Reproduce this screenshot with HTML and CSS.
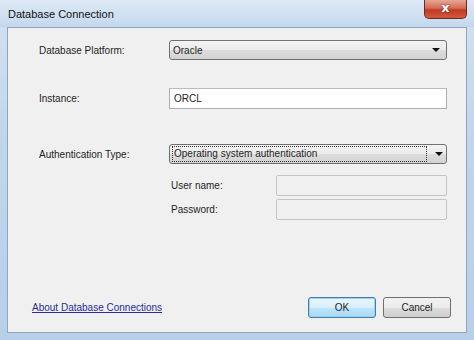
FILE: index.html
```html
<!DOCTYPE html>
<html lang="en">
<head>
    <meta charset="UTF-8">
    <title>Database Connection</title>
    <link rel="stylesheet" href="styles.css">
</head>
<body>
  <div class="window">
    <div class="titlebar">
      <span class="title">Database Connection</span>
      <div class="close-btn">x</div>
    </div>

    <div class="client">
      <div class="form">
        <div class="row row-platform">
          <span class="label">Database Platform:</span>
          <div class="combo">
            <span class="combo-text">Oracle</span>
            <span class="arrow"></span>
          </div>
        </div>

        <div class="row row-instance">
          <span class="label">Instance:</span>
          <div class="textbox">ORCL</div>
        </div>

        <div class="row row-auth">
          <span class="label">Authentication Type:</span>
          <div class="combo combo-focus">
            <span class="combo-text"><span class="focus-rect">Operating system authentication</span></span>
            <span class="combo-sep"></span>
            <span class="arrow"></span>
          </div>
        </div>

        <div class="sub-row sub-user">
          <span class="sub-label">User name:</span>
          <div class="textbox disabled"></div>
        </div>
        <div class="sub-row sub-pass">
          <span class="sub-label">Password:</span>
          <div class="textbox disabled"></div>
        </div>
      </div>

      <div class="footer">
        <a href="#" class="about-link">About Database Connections</a>
        <div class="buttons">
          <div class="btn btn-default">OK</div>
          <div class="btn">Cancel</div>
        </div>
      </div>
    </div>
  </div>
</body>
</html>
```

FILE: styles.css
```css
*,
*::before,
*::after {
box-sizing: border-box;
}

body {
margin: 0;
width: 474px;
height: 340px;
overflow: hidden;
font-family: "Liberation Sans", Arial, sans-serif;
font-size: 10px;
color: #1e1e1e;
}

.window {
width: 474px;
height: 340px;
display: flex;
flex-direction: column;
background: linear-gradient(180deg, #d3e2f1 0%, #c1d6ec 40%, #b7cfe9 100%);
}

/* title bar */
.titlebar {
height: 27px;
display: flex;
justify-content: space-between;
align-items: flex-start;
background: linear-gradient(180deg, #dce8f4 0%, #cfe0f1 60%, #c3d7ec 100%);
}

.title {
font-size: 11px;
color: #111;
margin-left: 8px;
margin-top: 8px;
}

.close-btn {
width: 43px;
height: 19px;
margin-right: 7px;
border: 1px solid #6e2a22;
border-top: none;
border-radius: 0 0 5px 5px;
background: linear-gradient(180deg, #e6a696 0%, #d46c55 45%, #c23a23 55%, #cf5a3e 100%);
color: #fff;
font-family: "DejaVu Sans", sans-serif;
font-weight: bold;
font-size: 13px;
text-align: center;
line-height: 16px;
text-shadow: 0 0 2px #5a1a10;
}

/* client area */
.client {
flex: 1;
margin: 0 7px 7px 7px;
border: 1px solid #8fa6c0;
background-color: #f0f0f0;
display: flex;
flex-direction: column;
}

.form {
padding-left: 30px;
}

.row {
display: grid;
grid-template-columns: 131px 278px;
align-items: center;
}

.row-platform {
margin-top: 12px;
}

.row-instance {
margin-top: 28px;
}

.row-auth {
margin-top: 35px;
}

.label {
padding-left: 1px;
}

.combo {
height: 20px;
display: flex;
align-items: center;
border: 1px solid #707070;
border-radius: 3px;
background: linear-gradient(180deg, #f3f3f3 0%, #ebebeb 50%, #dddddd 51%, #d2d2d2 100%);
padding: 0 6px 0 2px;
}

.combo-text {
flex: 1;
padding-left: 1px;
}

.combo-focus .combo-text {
padding-left: 0;
}

.focus-rect {
display: block;
border: 1px dotted #333;
padding: 1px 2px 2px 1px;
width: 255px;
}

.combo-sep {
width: 1px;
height: 16px;
background-color: #a8a8a8;
margin: 0 6px 0 2px;
}

.arrow {
width: 0;
height: 0;
border-left: 4px solid transparent;
border-right: 4px solid transparent;
border-top: 4px solid #111;
}

.textbox {
height: 21px;
border: 1px solid #abadb3;
border-top-color: #b9bcc2;
background-color: #fff;
padding: 0 4px;
line-height: 19px;
}

.textbox.disabled {
background-color: #f0f0f0;
border-color: #c4c4c4;
border-radius: 2px;
}

.sub-row {
display: grid;
grid-template-columns: 107px 171px;
align-items: center;
margin-left: 131px;
}

.sub-label {
padding-left: 2px;
}

.sub-user {
margin-top: 11px;
}

.sub-pass {
margin-top: 3px;
}

/* footer */
.footer {
margin-top: auto;
padding: 0 15px 14px 24px;
display: flex;
justify-content: space-between;
align-items: center;
}

.about-link {
color: #2b2b9c;
text-decoration: underline;
}

.buttons {
display: flex;
gap: 7px;
}

.btn {
width: 68px;
height: 21px;
border: 1px solid #707070;
border-radius: 3px;
background: linear-gradient(180deg, #f2f2f2 0%, #ebebeb 50%, #dddddd 51%, #cfcfcf 100%);
text-align: center;
line-height: 19px;
}

.btn-default {
border-color: #3c7fb1;
background: linear-gradient(180deg, #eaf6fd 0%, #d9f0fc 50%, #bee6fd 51%, #a7d9f5 100%);
box-shadow: inset 0 0 0 1px #9ed0ef;
}
```
